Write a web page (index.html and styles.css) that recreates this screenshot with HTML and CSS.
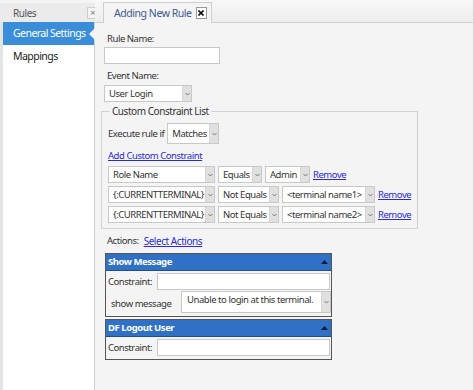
FILE: index.html
```html
<!DOCTYPE html>
<html lang="en">
<head>
    <meta charset="UTF-8">
    <meta name="viewport" content="width=device-width, initial-scale=1.0">
    <title>Rules</title>
    <link rel="stylesheet" href="styles.css">
</head>
<body>
    <div class="app">
        <div class="side">
            <div class="side_head">
                <span>Rules</span>
                <span class="side_x">&times;</span>
            </div>
            <div class="side_list">
                <div class="menu_item active">General Settings</div>
                <div class="menu_item">Mappings</div>
            </div>
        </div>

        <div class="main">
            <div class="tabs">
                <div class="tab">
                    <span>Adding New Rule</span>
                    <span class="tab_x">
                        <svg width="6" height="6" viewBox="0 0 6 6"><path d="M0.5 0.5 L5.5 5.5 M5.5 0.5 L0.5 5.5" stroke="#111" stroke-width="1.6"/></svg>
                    </span>
                </div>
            </div>

            <div class="content">
                <div class="label">Rule Name:</div>
                <div class="input rule_name"></div>

                <div class="label">Event Name:</div>
                <div class="sel sel_event"><span class="val">User Login</span><span class="arr"><svg width="5" height="4" viewBox="0 0 5 4"><path d="M0.5 1 L2.5 3 L4.5 1" fill="none" stroke="#777"/></svg></span></div>

                <fieldset class="box">
                    <legend>Custom Constraint List</legend>
                    <div class="exec_row">
                        <span>Execute rule if</span>
                        <div class="sel sel_match"><span class="val">Matches</span><span class="arr"><svg width="5" height="4" viewBox="0 0 5 4"><path d="M0.5 1 L2.5 3 L4.5 1" fill="none" stroke="#777"/></svg></span></div>
                    </div>
                    <a class="link add_link" href="#">Add Custom Constraint</a>

                    <div class="row">
                        <div class="sel c_field"><span class="val">Role Name</span><span class="arr"><svg width="5" height="4" viewBox="0 0 5 4"><path d="M0.5 1 L2.5 3 L4.5 1" fill="none" stroke="#777"/></svg></span></div>
                        <div class="sel c_op"><span class="val">Equals</span><span class="arr"><svg width="5" height="4" viewBox="0 0 5 4"><path d="M0.5 1 L2.5 3 L4.5 1" fill="none" stroke="#777"/></svg></span></div>
                        <div class="sel c_val"><span class="val">Admin</span><span class="arr"><svg width="5" height="4" viewBox="0 0 5 4"><path d="M0.5 1 L2.5 3 L4.5 1" fill="none" stroke="#777"/></svg></span></div>
                        <a class="link" href="#">Remove</a>
                    </div>
                    <div class="row">
                        <div class="sel c_field"><span class="val">{:CURRENTTERMINAL}</span><span class="arr"><svg width="5" height="4" viewBox="0 0 5 4"><path d="M0.5 1 L2.5 3 L4.5 1" fill="none" stroke="#777"/></svg></span></div>
                        <div class="sel c_op_wide"><span class="val">Not Equals</span><span class="arr"><svg width="5" height="4" viewBox="0 0 5 4"><path d="M0.5 1 L2.5 3 L4.5 1" fill="none" stroke="#777"/></svg></span></div>
                        <div class="sel c_val_wide"><span class="val">&lt;terminal name1&gt;</span><span class="arr"><svg width="5" height="4" viewBox="0 0 5 4"><path d="M0.5 1 L2.5 3 L4.5 1" fill="none" stroke="#777"/></svg></span></div>
                        <a class="link" href="#">Remove</a>
                    </div>
                    <div class="row">
                        <div class="sel c_field"><span class="val">{:CURRENTTERMINAL}</span><span class="arr"><svg width="5" height="4" viewBox="0 0 5 4"><path d="M0.5 1 L2.5 3 L4.5 1" fill="none" stroke="#777"/></svg></span></div>
                        <div class="sel c_op_wide"><span class="val">Not Equals</span><span class="arr"><svg width="5" height="4" viewBox="0 0 5 4"><path d="M0.5 1 L2.5 3 L4.5 1" fill="none" stroke="#777"/></svg></span></div>
                        <div class="sel c_val_wide"><span class="val">&lt;terminal name2&gt;</span><span class="arr"><svg width="5" height="4" viewBox="0 0 5 4"><path d="M0.5 1 L2.5 3 L4.5 1" fill="none" stroke="#777"/></svg></span></div>
                        <a class="link" href="#">Remove</a>
                    </div>
                </fieldset>

                <div class="actions">
                    <span>Actions:</span>
                    <a class="link" href="#">Select Actions</a>
                </div>

                <div class="panel">
                    <div class="panel_head">
                        <span>Show Message</span>
                        <svg width="7" height="4" viewBox="0 0 7 4"><path d="M0 4 L3.5 0 L7 4 Z" fill="#0b1d3d"/></svg>
                    </div>
                    <div class="panel_body">
                        <div class="prow">
                            <span class="plabel">Constraint:</span>
                            <div class="input p_input"></div>
                        </div>
                        <div class="prow msg_row">
                            <span class="plabel msg_label">show message</span>
                            <div class="sel c_msg"><span class="val">Unable to login at this terminal.</span><span class="arr"><svg width="5" height="4" viewBox="0 0 5 4"><path d="M0.5 1 L2.5 3 L4.5 1" fill="none" stroke="#777"/></svg></span></div>
                        </div>
                    </div>
                </div>

                <div class="panel">
                    <div class="panel_head">
                        <span>DF Logout User</span>
                        <svg width="7" height="4" viewBox="0 0 7 4"><path d="M0 4 L3.5 0 L7 4 Z" fill="#0b1d3d"/></svg>
                    </div>
                    <div class="panel_body">
                        <div class="prow">
                            <span class="plabel">Constraint:</span>
                            <div class="input p_input"></div>
                        </div>
                    </div>
                </div>
            </div>
        </div>
    </div>
</body>
</html>
```

FILE: styles.css
```css
html, body {
    margin: 0;
    padding: 0;
}
body {
    width: 474px;
    height: 390px;
    overflow: hidden;
    font-family: "Noto Sans", "Open Sans", sans-serif;
    font-size: 9.5px;
    line-height: 14px;
    letter-spacing: -0.45px;
    color: #333;
    background: #f4f4f4;
}
.app {
    display: flex;
    height: 390px;
}

/* left side */
.side {
    width: 95px;
    display: flex;
    flex-direction: column;
}
.side_head {
    height: 19px;
    margin-top: 3px;
    display: flex;
    align-items: center;
    justify-content: space-between;
    padding-left: 13px;
    background: #ebebeb;
    color: #555;
    font-size: 10px;
}
.side_x {
    width: 9px;
    height: 10px;
    border: 1px solid #cfcfcf;
    background: #f3f3f3;
    color: #777;
    font-size: 9px;
    line-height: 9px;
    text-align: center;
    margin-right: -3px;
}
.side_list {
    flex: 1;
    background: #fff;
    border-left: 3px solid #e4e4e4;
    border-right: 1px solid #d2d2d2;
}
.menu_item {
    height: 23px;
    line-height: 23px;
    padding-left: 10px;
    font-size: 10.5px;
    letter-spacing: -0.55px;
    color: #222;
    white-space: nowrap;
}
.menu_item.active {
    position: relative;
    background: #3a8dd8;
    color: #fff;
}
.menu_item.active::after {
    content: "";
    position: absolute;
    right: -1px;
    top: 6px;
    border-top: 6px solid transparent;
    border-bottom: 6px solid transparent;
    border-right: 6px solid #f4f4f4;
}

/* main */
.main {
    flex: 1;
    display: flex;
    flex-direction: column;
    border-right: 1px solid #d4d4d4;
}
.tabs {
    height: 22px;
    display: flex;
    align-items: flex-end;
    padding-left: 8px;
    background: linear-gradient(#f8f8f8, #ededed);
    border-bottom: 1px solid #cfcfcf;
}
.tab {
    height: 20px;
    margin-bottom: -1px;
    display: flex;
    align-items: center;
    gap: 4px;
    padding: 0 4px 0 10px;
    background: #f4f4f4;
    border: 1px solid #cfcfcf;
    border-bottom: 0;
    color: #3d5c8f;
    font-size: 10.5px;
}
.tab_x {
    width: 9px;
    height: 10px;
    display: flex;
    align-items: center;
    justify-content: center;
    border: 1px solid #999;
    background: #fff;
}
.content {
    padding: 9px 0 0 9px;
}
.label {
    height: 14px;
    margin-left: 3px;
}
.input {
    height: 17px;
    box-sizing: border-box;
    background: #fff;
    border: 1px solid #c8c8c8;
}
.rule_name {
    width: 116px;
    margin: 1px 0 5px;
}
.sel {
    display: flex;
    height: 17px;
    box-sizing: border-box;
    background: #fff;
    border: 1px solid #c8c8c8;
}
.sel .val {
    flex: 1;
    padding-left: 4px;
    line-height: 15px;
    white-space: nowrap;
    overflow: hidden;
}
.sel .arr {
    width: 8px;
    display: flex;
    align-items: center;
    justify-content: center;
    background: #e0e0e0;
    border-left: 1px solid #d6d6d6;
}
.sel_event {
    width: 88px;
    margin-top: 2px;
}

/* constraint box */
.box {
    width: 311px;
    box-sizing: border-box;
    margin: 2px 0 0 -3px;
    padding: 0 6px 5px 6px;
    border: 1px solid #d2d2d2;
}
.box legend {
    padding: 0 2px;
    margin-left: 2px;
    font-size: 10px;
}
.exec_row {
    display: flex;
    align-items: center;
    gap: 3px;
    margin-top: 5px;
}
.sel_match {
    width: 52px;
    height: 21px;
}
.sel_match .val {
    line-height: 19px;
}
.link {
    color: #2a2ad8;
    text-decoration: underline;
}
.add_link {
    display: block;
    margin: 5px 0 2px;
}
.row {
    display: flex;
    align-items: center;
    gap: 3px;
    margin-top: 3px;
}
.c_field { width: 107px; }
.c_op { width: 44px; }
.c_val { width: 45px; }
.c_op_wide { width: 61px; }
.c_val_wide { width: 93px; }

/* actions */
.actions {
    display: flex;
    gap: 5px;
    align-items: center;
    height: 14px;
    margin: 5px 0 5px 3px;
}
.actions .link {
    font-size: 10px;
}
.panel {
    width: 227px;
    margin-left: 1px;
    margin-bottom: 2px;
    box-sizing: border-box;
    border: 1px solid #555;
}
.panel_head {
    height: 16px;
    display: flex;
    align-items: center;
    justify-content: space-between;
    padding: 0 3px 0 2px;
    background: #3171c5;
    border-bottom: 1px solid #1f4f8f;
    color: #fff;
    font-weight: bold;
}
.panel_body {
    padding: 2px 1px 3px 2px;
}
.prow {
    display: flex;
    align-items: center;
}
.plabel {
    width: 49px;
    white-space: nowrap;
}
.p_input {
    flex: 1;
}
.msg_row {
    align-items: stretch;
    margin-top: 1px;
}
.msg_label {
    width: 73px;
    padding: 6px 0 0 3px;
    box-sizing: border-box;
}
.c_msg {
    flex: 1;
    height: 22px;
    margin-right: -1px;
}
.c_msg .val {
    padding-left: 5px;
    line-height: 16px;
}
```
